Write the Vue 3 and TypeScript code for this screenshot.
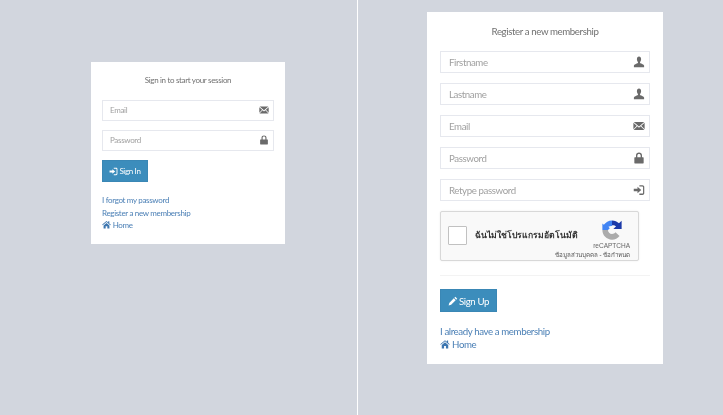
<script setup lang="ts">
const registerFields = [
  { placeholder: 'Firstname', icon: 'user' },
  { placeholder: 'Lastname', icon: 'user' },
  { placeholder: 'Email', icon: 'mail' },
  { placeholder: 'Password', icon: 'lock' },
  { placeholder: 'Retype password', icon: 'login' }
]

const loginFields = [
  { placeholder: 'Email', icon: 'mail' },
  { placeholder: 'Password', icon: 'lock' }
]

const icons: Record<string, string> = {
  user: 'M5.2 4.2C5.2 2 6.3.6 8 .6s2.8 1.4 2.8 3.6c0 1.5-.6 2.9-1.4 3.7v1.5c0 .6 4.6 1.3 5.4 3.4V15H1.200v-2.200c.8-2.100 5.400-2.800 5.400-3.400V7.900C5.800 7.100 5.200 5.700 5.200 4.200Z',
  mail: 'M1 2.500h14L8 8.500ZM.5 3.700 5 7.700.5 12.300ZM15.500 3.700V12.300L11 7.700ZM5.800 8.400 8 10.300l2.200-1.900 5 5H.8Z',
  lock: 'M2.500 7H4V4.500C4 2.200 5.700.8 8 .8s4 1.400 4 3.700V7h1.500c.4 0 .7.300.7.700v6.800c0 .4-.3.7-.7.700h-11c-.4 0-.7-.3-.7-.7V7.700c0-.4.3-.7.700-.7ZM5.800 7h4.400V4.600C10.200 3.200 9.300 2.500 8 2.500s-2.200.7-2.200 2.100Z',
  login: 'M8.500 1.500h4.200c1.200 0 2.300 1 2.300 2.300v8.400c0 1.300-1.100 2.300-2.300 2.300H8.500v-1.700h4c.5 0 .9-.4.900-.9V4.100c0-.5-.4-.9-.9-.9h-4ZM6 3.800 11 8l-5 4.200V9.600H1V6.400h5Z',
  pencil: 'M11.800 1.200 14.800 4.200 13.200 5.800 10.200 2.800ZM9.300 3.700 12.300 6.700 5 14 1 15 2 11Z',
  home: 'M8 1.800.4 8.200l.9 1L8 3.600l6.700 5.600.9-1L13 6V2.200h-2v2.100ZM2.800 9.600V15h3.700v-3.800h3V15h3.700V9.600L8 5.200Z'
}
</script>

<template>
  <main class="page">
    <section class="pane pane-login">
      <div class="card login-card">
        <p class="title">Sign in to start your session</p>
        <div v-for="f in loginFields" :key="f.placeholder" class="field">
          <span class="placeholder">{{ f.placeholder }}</span>
          <svg class="icon" viewBox="0 0 16 16"><path :d="icons[f.icon]" /></svg>
        </div>
        <button type="button" class="btn">
          <svg viewBox="0 0 16 16"><path :d="icons.login" /></svg>Sign In
        </button>
        <nav class="links">
          <a>I forgot my password</a>
          <a>Register a new membership</a>
          <a><svg viewBox="0 0 16 16"><path :d="icons.home" /></svg> Home</a>
        </nav>
      </div>
    </section>

    <section class="pane pane-register">
      <div class="card register-card">
        <p class="title">Register a new membership</p>
        <div v-for="f in registerFields" :key="f.placeholder" class="field">
          <span class="placeholder">{{ f.placeholder }}</span>
          <svg class="icon" viewBox="0 0 16 16"><path :d="icons[f.icon]" /></svg>
        </div>
        <div class="captcha">
          <span class="check"></span>
          <span class="captcha-label">ฉันไม่ใช่โปรแกรมอัตโนมัติ</span>
          <div class="captcha-brand">
            <svg viewBox="0 0 24 24" class="recaptcha">
              <path fill="#ababab" d="M1.500 12c0 5.800 4.700 10.500 10.500 10.500 3.300 0 6.300-1.500 8.200-4L15.800 14.500c-.8 1-2.200 1.900-3.800 1.900-2.400 0-4.400-2-4.400-4.400Z" />
              <path fill="#4285f4" d="M12 1.500C8.300 1.500 5 3.400 3.100 6.400L1.500 4.800V12h6.100l2-2-1.500-1.500c.9-.6 2.400-1 3.900-1Z" />
              <path fill="#1c3aa9" d="M12 1.500c3 0 5.700 1.200 7.600 3.200L22.500 2v9h-9l3-3C15.400 7.400 13.800 6.700 12 7Z" />
            </svg>
            <span class="captcha-name">reCAPTCHA</span>
          </div>
          <span class="captcha-terms">ข้อมูลส่วนบุคคล - ข้อกำหนด</span>
        </div>
        <hr class="rule" />
        <button type="button" class="btn">
          <svg viewBox="0 0 16 16"><path :d="icons.pencil" /></svg>Sign Up
        </button>
        <nav class="links">
          <a>I already have a membership</a>
          <a><svg viewBox="0 0 16 16"><path :d="icons.home" /></svg> Home</a>
        </nav>
      </div>
    </section>
  </main>
</template>

<style scoped>
.page {
  display: flex;
  width: 723px;
  height: 415px;
  overflow: hidden;
  background: #d2d6de;
  font-family: "Lato", "Open Sans", sans-serif;
  color: #707070;
  filter: blur(0.35px);
}

.pane {
  box-sizing: border-box;
  height: 415px;
}

.pane-login {
  width: 358px;
  padding: 62px 0 0 91px;
  border-right: 1px solid #fff;
}

.pane-register {
  flex: 1;
  padding: 12px 0 0 69px;
}

.card {
  box-sizing: border-box;
  background: #fff;
}

.login-card {
  width: 194px;
  height: 182px;
  padding: 12px 11px 0;
  font-size: 8px;
  letter-spacing: -0.33px;
}

.register-card {
  width: 236px;
  height: 352px;
  padding: 13px 13px 0;
  font-size: 9.700px;
  letter-spacing: -0.4px;
}

.title {
  margin: 0;
  text-align: center;
  line-height: 12px;
}

.login-card .title {
  margin-bottom: 14px;
}

.register-card .title {
  margin-bottom: 14px;
}

.field {
  box-sizing: border-box;
  display: flex;
  align-items: center;
  justify-content: space-between;
  border: 1px solid #e6e8ee;
}

.login-card .field {
  height: 21px;
  margin-bottom: 9px;
  padding: 0 4px 1px 7px;
}

.register-card .field {
  height: 22px;
  margin-bottom: 10px;
  padding: 0 4px 0 8px;
}

.placeholder {
  color: #a0a0a0;
}

.icon {
  fill: #6a6a6a;
}

.login-card .icon {
  width: 10px;
  height: 10px;
}

.register-card .icon {
  width: 12px;
  height: 12px;
}

.btn {
  display: flex;
  align-items: center;
  justify-content: center;
  padding: 0;
  border: 1px solid #3a87b5;
  background: #3c8dbc;
  color: #fff;
  font: inherit;
  letter-spacing: inherit;
}

.btn svg {
  fill: #fff;
  margin-right: 1px;
}

.login-card .btn {
  width: 46px;
  height: 22px;
}

.login-card .btn svg {
  width: 9px;
  height: 9px;
}

.register-card .btn {
  width: 57px;
  height: 23px;
}

.register-card .btn svg {
  width: 10px;
  height: 10px;
}

.links {
  display: flex;
  flex-direction: column;
  align-items: flex-start;
  color: #4a7fb5;
}

.links svg {
  fill: #3c76b0;
  vertical-align: -1px;
}

.login-card .links {
  margin-top: 12px;
  line-height: 12.500px;
}

.login-card .links svg {
  width: 9px;
  height: 9px;
}

.register-card .links {
  margin-top: 13px;
  line-height: 13px;
}

.register-card .links svg {
  width: 10px;
  height: 10px;
}

.captcha {
  box-sizing: border-box;
  position: relative;
  display: flex;
  align-items: center;
  width: 199px;
  height: 50px;
  border: 1px solid #d8d8d8;
  border-radius: 2px;
  background: #f9f9f9;
  box-shadow: 0 0 2px rgba(0, 0, 0, 0.08);
  letter-spacing: 0;
}

.check {
  box-sizing: border-box;
  width: 19px;
  height: 19px;
  margin: -2px 0 0 7px;
  border: 1px solid #c1c1c1;
  border-radius: 1px;
  background: #fff;
}

.captcha-label {
  margin: -3px 0 0 8px;
  font-family: "Noto Sans", "DejaVu Sans", sans-serif;
  font-size: 8.600px;
  font-weight: 600;
  color: #333;
  white-space: nowrap;
}

.captcha-brand {
  position: absolute;
  top: 7px;
  right: 8px;
  display: flex;
  flex-direction: column;
  align-items: center;
}

.recaptcha {
  width: 22px;
  height: 22px;
}

.captcha-name {
  font-family: "Liberation Sans", sans-serif;
  font-size: 6.500px;
  line-height: 8px;
  margin-top: 1px;
  color: #666;
}

.captcha-terms {
  position: absolute;
  right: 8px;
  bottom: 1px;
  font-family: "Noto Sans", "DejaVu Sans", sans-serif;
  font-size: 6.200px;
  line-height: 8px;
  color: #555;
  white-space: nowrap;
}

.rule {
  height: 1px;
  margin: 14px 0 13px;
  border: 0;
  background: #f3f3f3;
}
</style>

<style>
body {
  margin: 0;
}
</style>
